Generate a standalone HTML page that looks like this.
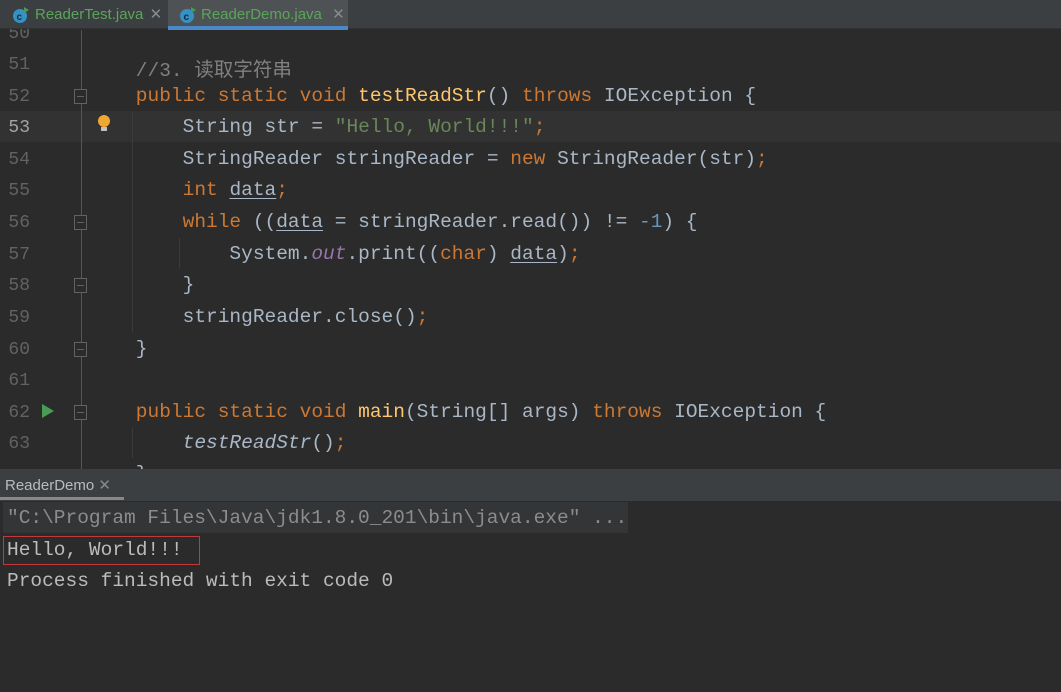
<!DOCTYPE html>
<html><head><meta charset="utf-8"><style>
*{margin:0;padding:0;box-sizing:border-box}
body{width:1061px;height:692px;background:#2b2b2b;position:relative;overflow:hidden;font-family:"Liberation Mono",monospace}
.abs{position:absolute}
.tabs{left:0;top:0;width:1061px;height:29px;background:#3c3f41;border-bottom:1px solid #323232}
.tab{top:0;height:29px;font-family:"Liberation Sans",sans-serif;font-size:15px;color:#5aa55a;line-height:29px}
.ln{left:0;width:30px;text-align:right;color:#606366;font-size:18px}
.code{left:89px;white-space:pre;font-size:19.5px;color:#a9b7c6}
.k{color:#cc7832}.s{color:#6a8759}.c{color:#808080}.m{color:#ffc66d}.f{color:#9876aa;font-style:italic}.n{color:#6897bb}.i{font-style:italic}.u{text-decoration:underline;text-underline-offset:3px}
.fold{left:74px;width:13px;height:15px;border:1px solid #606366;background:#2b2b2b}
.fold::after{content:"";position:absolute;left:2px;right:2px;top:6px;height:1px;background:#606366}
.con{left:7px;white-space:pre;font-size:19.5px;color:#bbbbbb}
</style></head><body>
<div class="abs" style="left:0;top:111px;width:1061px;height:31px;background:#323232"></div>
<div class="abs" style="left:81px;top:30px;width:1px;height:440px;background:#555"></div>
<div class="abs" style="left:132px;top:112px;width:1px;height:220px;background:#3b3b3b"></div>
<div class="abs" style="left:179px;top:238px;width:1px;height:30px;background:#3b3b3b"></div>
<div class="abs" style="left:132px;top:428px;width:1px;height:30px;background:#3b3b3b"></div>

<div class="abs ln" style="top:24px">50</div>
<div class="abs ln" style="top:55px">51</div>
<div class="abs ln" style="top:87px">52</div>
<div class="abs ln" style="top:118px;color:#a4a3a3">53</div>
<div class="abs ln" style="top:150px">54</div>
<div class="abs ln" style="top:181px">55</div>
<div class="abs ln" style="top:213px">56</div>
<div class="abs ln" style="top:245px">57</div>
<div class="abs ln" style="top:276px">58</div>
<div class="abs ln" style="top:308px">59</div>
<div class="abs ln" style="top:340px">60</div>
<div class="abs ln" style="top:371px">61</div>
<div class="abs ln" style="top:403px">62</div>
<div class="abs ln" style="top:434px">63</div>

<div class="abs fold" style="top:89px"></div>
<div class="abs fold" style="top:215px"></div>
<div class="abs fold" style="top:278px"></div>
<div class="abs fold" style="top:342px"></div>
<div class="abs fold" style="top:405px"></div>
<svg class="abs" style="left:96px;top:114px" width="16" height="20"><circle cx="8" cy="7" r="6" fill="#f0a732"/><rect x="5" y="13" width="6" height="4" fill="#c0c0c0"/></svg>
<svg class="abs" style="left:40px;top:403px" width="16" height="16"><path d="M2 1 L14 8 L2 15Z" fill="#499c54"/></svg>

<div class="abs code" style="top:53px"><span class="c">    //3. 读取字符串</span></div>
<div class="abs code" style="top:85px"><span class="k">    public static void </span><span class="m">testReadStr</span>() <span class="k">throws </span>IOException {</div>
<div class="abs code" style="top:116px">        String str = <span class="s">"Hello, World!!!"</span><span class="k">;</span></div>
<div class="abs code" style="top:148px">        StringReader stringReader = <span class="k">new </span>StringReader(str)<span class="k">;</span></div>
<div class="abs code" style="top:179px"><span class="k">        int </span><span class="u">data</span><span class="k">;</span></div>
<div class="abs code" style="top:211px"><span class="k">        while </span>((<span class="u">data</span> = stringReader.read()) != <span class="n">-1</span>) {</div>
<div class="abs code" style="top:243px">            System.<span class="f">out</span>.print((<span class="k">char</span>) <span class="u">data</span>)<span class="k">;</span></div>
<div class="abs code" style="top:274px">        }</div>
<div class="abs code" style="top:306px">        stringReader.close()<span class="k">;</span></div>
<div class="abs code" style="top:338px">    }</div>
<div class="abs code" style="top:401px"><span class="k">    public static void </span><span class="m">main</span>(String[] args) <span class="k">throws </span>IOException {</div>
<div class="abs code" style="top:432px">        <span class="i">testReadStr</span>()<span class="k">;</span></div>
<div class="abs code" style="top:463px">    }</div>

<div class="abs tabs"></div>
<div class="abs" style="left:168px;top:0;width:180px;height:29px;background:#4e5254"></div>
<div class="abs" style="left:168px;top:26px;width:180px;height:4px;background:#4a88c7"></div>
<svg class="abs" style="left:12px;top:6px" width="18" height="18"><circle cx="8" cy="10" r="7" fill="#3592c4"/><text x="4.5" y="14" font-family="Liberation Sans" font-weight="bold" font-size="10" fill="#1d2a33">c</text><path d="M12 1 L17 4 L12 7Z" fill="#499c54"/></svg>
<div class="abs tab" style="left:35px">ReaderTest.java <span style="color:#8a8a8a;margin-left:2px">✕</span></div>
<svg class="abs" style="left:179px;top:6px" width="18" height="18"><circle cx="8" cy="10" r="7" fill="#3592c4"/><text x="4.5" y="14" font-family="Liberation Sans" font-weight="bold" font-size="10" fill="#1d2a33">c</text><path d="M12 1 L17 4 L12 7Z" fill="#499c54"/></svg>
<div class="abs tab" style="left:201px">ReaderDemo.java <span style="color:#8a8a8a;margin-left:6px">✕</span></div>

<div class="abs" style="left:0;top:469px;width:1061px;height:32px;background:#3c3f41"></div>
<div class="abs" style="left:0;top:497px;width:124px;height:3px;background:#888"></div>
<div class="abs" style="left:5px;top:476px;font-family:'Liberation Sans',sans-serif;font-size:15px;color:#bbbbbb">ReaderDemo <span style="color:#888">✕</span></div>
<div class="abs" style="left:3px;top:502px;width:625px;height:31px;background:#333537"></div>
<div class="abs con" style="top:507px;color:#8c8c8c">"C:\Program Files\Java\jdk1.8.0_201\bin\java.exe" ...</div>
<div class="abs con" style="top:539px">Hello, World!!!</div>
<div class="abs" style="left:3px;top:536px;width:197px;height:29px;border:1.5px solid #c0393b"></div>
<div class="abs con" style="top:570px">Process finished with exit code 0</div>
</body></html>
